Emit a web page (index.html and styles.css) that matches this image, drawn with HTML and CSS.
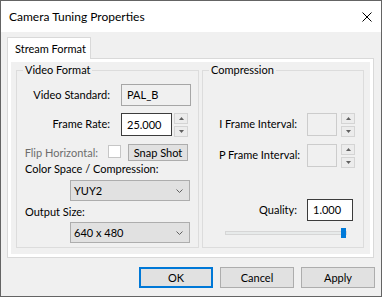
FILE: index.html
```html
<!DOCTYPE html>
<html>
<head>
<meta charset="utf-8">
<title>Camera Tuning Properties</title>
<link rel="stylesheet" href="styles.css">
</head>
<body>
<div class="window">
  <div class="titlebar">
    <span class="title">Camera Tuning Properties</span>
    <svg class="close" width="10" height="10" viewBox="0 0 10 10"><path d="M0.5 0.5L9.5 9.5M9.5 0.5L0.5 9.5" stroke="#000" stroke-width="1" fill="none"/></svg>
  </div>
  <div class="body">
    <div class="tabs"><div class="tab">Stream Format</div></div>
    <div class="panel">
      <div class="page">
        <fieldset class="group group-video">
          <legend>Video Format</legend>
          <div class="row row-std">
            <span class="lbl lbl-v lh22">Video Standard:</span>
            <div class="edit edit-ro">PAL_B</div>
          </div>
          <div class="row row-rate">
            <span class="lbl lbl-v lh21">Frame Rate:</span>
            <div class="edit edit-rate">25.000</div>
            <div class="spin">
              <div class="spin-btn"><svg width="5" height="3" viewBox="0 0 5 3"><polygon points="2.5,0 5,3 0,3" fill="#606060"/></svg></div>
              <div class="spin-btn"><svg width="5" height="3" viewBox="0 0 5 3"><polygon points="0,0 5,0 2.5,3" fill="#606060"/></svg></div>
            </div>
          </div>
          <div class="row row-flip">
            <span class="lbl lbl-flip disabled">Flip Horizontal:</span>
            <div class="check"></div>
            <button class="btn btn-snap">Snap Shot</button>
          </div>
          <div class="caption cap-cs">Color Space / Compression:</div>
          <div class="combo combo-1"><span>YUY2</span><svg width="7" height="4" viewBox="0 0 7 4"><polyline points="0.5,0.5 3.5,3.5 6.5,0.5" fill="none" stroke="#606060" stroke-width="1"/></svg></div>
          <div class="caption cap-os">Output Size:</div>
          <div class="combo combo-2"><span>640 x 480</span><svg width="7" height="4" viewBox="0 0 7 4"><polyline points="0.5,0.5 3.5,3.5 6.5,0.5" fill="none" stroke="#606060" stroke-width="1"/></svg></div>
        </fieldset>
        <fieldset class="group group-comp">
          <legend>Compression</legend>
          <div class="row row-i">
            <span class="lbl lbl-c lh21">I Frame Interval:</span>
            <div class="edit edit-dis"></div>
            <div class="spin spin-r">
              <div class="spin-btn"><svg width="5" height="3" viewBox="0 0 5 3"><polygon points="2.5,0 5,3 0,3" fill="#606060"/></svg></div>
              <div class="spin-btn"><svg width="5" height="3" viewBox="0 0 5 3"><polygon points="0,0 5,0 2.5,3" fill="#606060"/></svg></div>
            </div>
          </div>
          <div class="row row-p">
            <span class="lbl lbl-c lbl-p lh21">P Frame Interval:</span>
            <div class="edit edit-dis"></div>
            <div class="spin spin-r">
              <div class="spin-btn"><svg width="5" height="3" viewBox="0 0 5 3"><polygon points="2.5,0 5,3 0,3" fill="#606060"/></svg></div>
              <div class="spin-btn"><svg width="5" height="3" viewBox="0 0 5 3"><polygon points="0,0 5,0 2.5,3" fill="#606060"/></svg></div>
            </div>
          </div>
          <div class="row row-q">
            <span class="lbl lbl-c lh22">Quality:</span>
            <div class="edit edit-q">1.000</div>
          </div>
          <div class="slider"><div class="track"><div class="thumb"></div></div></div>
        </fieldset>
      </div>
    </div>
    <div class="buttons">
      <button class="btn btn-dlg btn-default">OK</button>
      <button class="btn btn-dlg">Cancel</button>
      <button class="btn btn-dlg">Apply</button>
    </div>
  </div>
</div>
</body>
</html>
```

FILE: styles.css
```css
* { box-sizing: border-box; }
html, body { margin: 0; padding: 0; }
body {
  font-family: Lato, "Liberation Sans", sans-serif;
  font-size: 11px;
  color: #000;
  background: #f0f0f0;
}
.window {
  width: 382px;
  height: 297px;
  border: 1px solid #646464;
  background: #f0f0f0;
  display: flex;
  flex-direction: column;
  overflow: hidden;
}
.titlebar {
  flex: none;
  height: 31px;
  background: #fff;
  display: flex;
  align-items: center;
  justify-content: space-between;
  padding: 0 9px 0 8px;
}
.title { font-size: 12px; white-space: nowrap; }
.close { display: block; }
.body {
  flex: 1;
  display: flex;
  flex-direction: column;
  padding: 5px 6px 0 6px;
}
.tabs { display: flex; height: 21px; }
.tab {
  width: 84px;
  height: 22px;
  border: 1px solid #d9d9d9;
  border-bottom: none;
  background: #fff;
  padding-left: 7px;
  line-height: 21px;
  white-space: nowrap;
  position: relative;
  z-index: 1;
}
.panel {
  height: 200px;
  margin-right: 1px;
  border: 1px solid #d9d9d9;
  background: #fff;
  padding: 3px;
}
.page {
  height: 100%;
  background: #f0f0f0;
  display: flex;
  align-items: flex-start;
  gap: 3px;
  padding: 1px 0 0 5px;
}
fieldset.group {
  margin: 0;
  padding: 0;
  border: 1px solid #dcdcdc;
  height: 185px;
  min-width: 0;
}
.group legend {
  margin-left: 6px;
  padding: 0 2px;
  line-height: 14px;
  white-space: nowrap;
}
.group-video { width: 183px; }
.group-comp { width: 162px; }
.row { display: flex; align-items: flex-start; }
.lbl { white-space: nowrap; text-align: right; flex: none; }
.lh21 { line-height: 21px; }
.lh22 { line-height: 22px; }
.lbl-v { width: 93px; margin-right: 11px; }
.lbl-c { width: 94px; margin-right: 10px; }
.lbl-p { width: 97px; margin-right: 7px; }
.lbl-flip { width: 81px; margin-right: 10px; line-height: 17px; }
.disabled { color: #6d6d6d; }
.edit {
  flex: none;
  background: #fff;
  border: 1px solid #3c3c3c;
  padding-left: 5px;
  line-height: 20px;
  white-space: nowrap;
}
.edit-ro { width: 70px; height: 22px; background: #f0f0f0; border-color: #a6a6a6; }
.edit-rate { width: 51px; height: 23px; line-height: 21px; }
.edit-dis { width: 30px; height: 23px; background: #f0f0f0; border-color: #cccccc; }
.edit-q { width: 46px; height: 22px; }
.spin {
  flex: none;
  width: 14px;
  margin-left: 2px;
  display: flex;
  flex-direction: column;
  gap: 2px;
}
.spin-r { margin-left: 4px; }
.spin-btn {
  height: 11px;
  border: 1px solid #d4d4d4;
  background: #ececec;
  display: flex;
  align-items: center;
  justify-content: center;
}
.spin-btn svg { display: block; }
.row-std { margin-top: 7px; }
.row-rate { margin-top: 7px; }
.row-flip { margin-top: 7px; }
.check {
  flex: none;
  width: 13px;
  height: 13px;
  margin-top: 1px;
  margin-right: 7px;
  border: 1px solid #c6c6c6;
  background: #fff;
}
.btn {
  font-family: inherit;
  font-size: 11px;
  color: #000;
  background: #e1e1e1;
  border: 1px solid #adadad;
  padding: 0;
  margin: 0;
  white-space: nowrap;
}
.btn-snap { width: 60px; height: 17px; line-height: 15px; }
.caption { margin-left: 8px; line-height: 14px; white-space: nowrap; }
.cap-cs { margin-top: 1px; }
.cap-os { margin-top: 4px; }
.combo {
  width: 120px;
  height: 21px;
  margin-left: 53px;
  border: 1px solid #adadad;
  background: #e1e1e1;
  display: flex;
  align-items: center;
  justify-content: space-between;
  padding: 0 6px 0 3px;
}
.combo svg { display: block; }
.combo-1 { margin-top: 4px; }
.combo-2 { margin-top: 3px; }
.row-i { margin-top: 36px; }
.row-p { margin-top: 7px; }
.row-q { margin-top: 31px; }
.slider {
  margin: 7px 0 0 22px;
  width: 122px;
  height: 10px;
  display: flex;
  align-items: center;
}
.track {
  flex: 1;
  height: 4px;
  border: 1px solid #d6d6d6;
  background: #e7eaea;
  display: flex;
  align-items: center;
  justify-content: flex-end;
}
.thumb {
  flex: none;
  width: 5px;
  height: 10px;
  background: #007ad9;
}
.buttons {
  display: flex;
  justify-content: flex-end;
  gap: 7px;
  margin-top: 9px;
}
.btn-dlg { width: 74px; height: 21px; }
.btn-default { border: 2px solid #0078d7; }
```
